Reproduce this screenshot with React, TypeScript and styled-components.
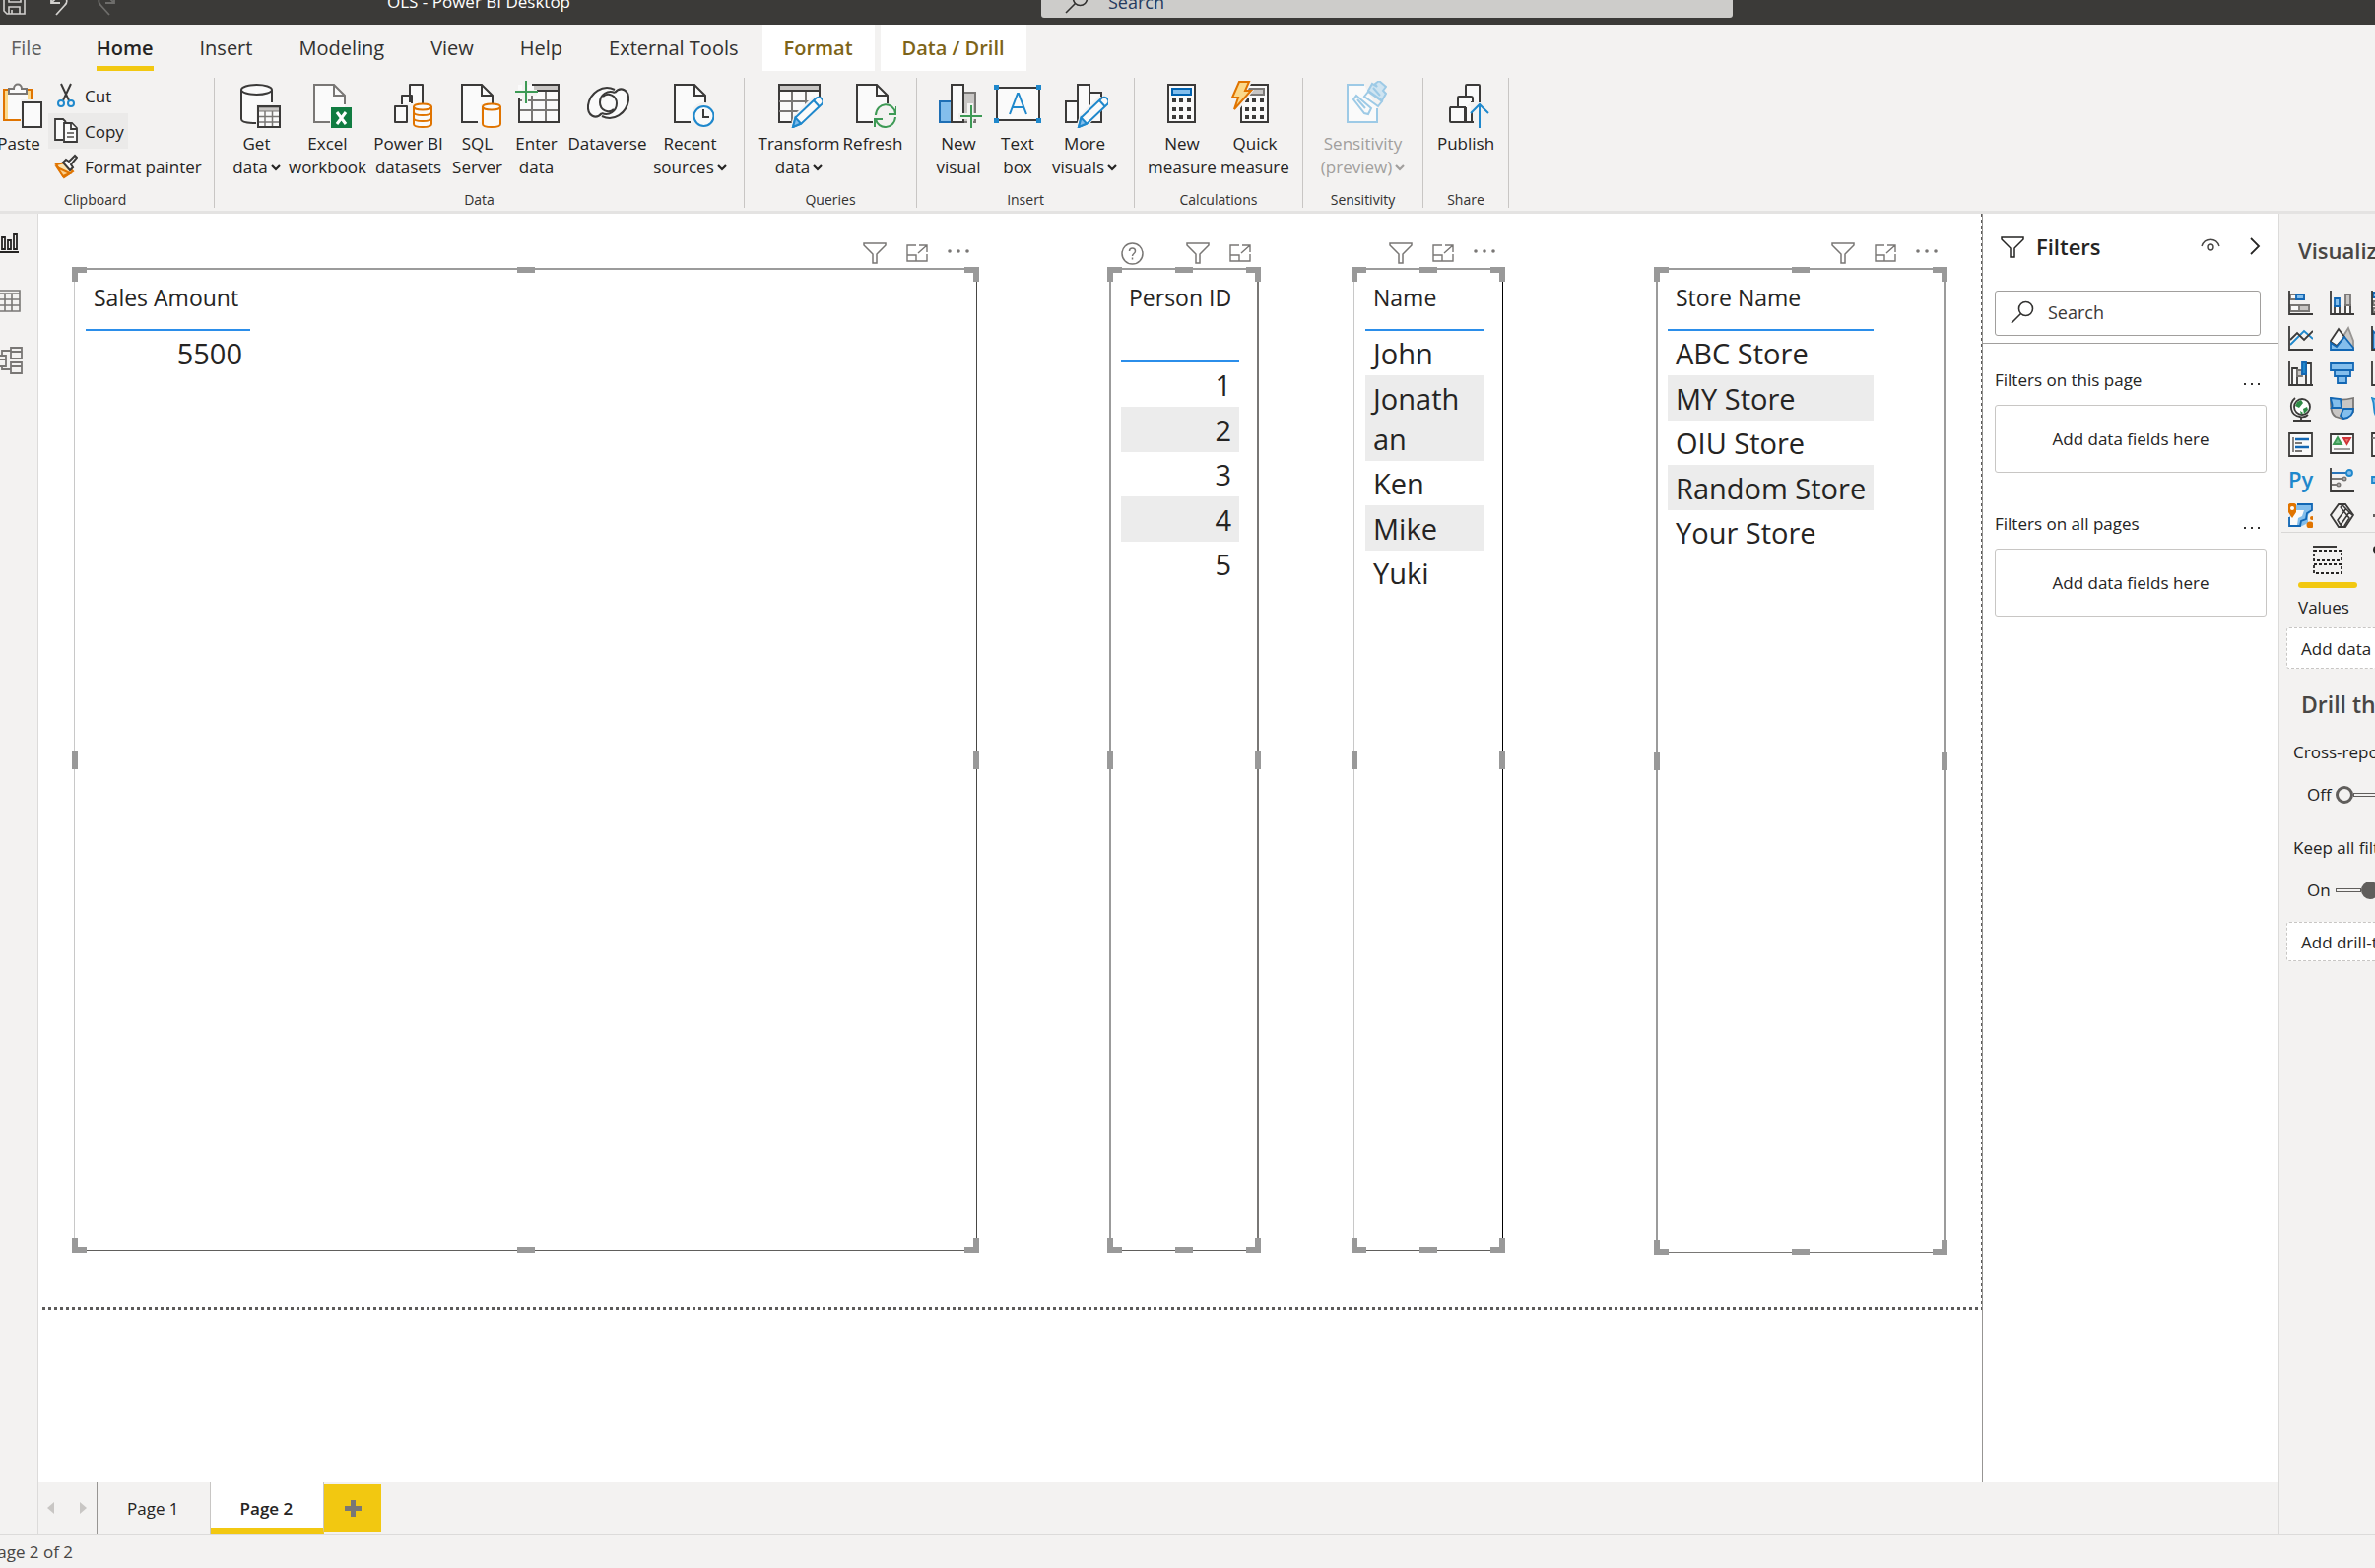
import React from 'react';
import styled, { createGlobalStyle, css } from 'styled-components';

const GlobalStyle = createGlobalStyle`
  *, *::before, *::after { box-sizing: border-box; }
  html, body { margin: 0; background: #f3f2f1; overflow: hidden; }
  body, button, input, table {
    font-family: "Open Sans", "Noto Sans", "Liberation Sans", sans-serif;
    font-size: 17px;
    color: #252423;
  }
  button { background: none; border: 0; padding: 0; margin: 0; cursor: pointer; white-space: nowrap; }
  svg { display: block; flex: none; }
`;

const Shell = styled.div`
  display: flex;
  flex-direction: column;
  height: 100vh;
  min-height: 1200px;
  overflow: hidden;
  background: #f3f2f1;
`;

/* ---------- title bar ---------- */

const TitleBar = styled.header`
  flex: none;
  display: grid;
  grid-template-columns: 393px 1fr 702px 652px;
  align-items: end;
  align-content: end;
  height: 25px;
  overflow: hidden;
  background: #3b3a38;
  color: #fff;
`;
const QuickAccess = styled.div`
  display: flex;
  gap: 22px;
  padding: 0 0 9px 3px;
`;
const QuickButton = styled.button`
  color: #d2d0ce;
  &:disabled { color: #6e6d6b; }
`;
const DocTitle = styled.div`
  font-size: 17px;
  line-height: 24px;
  padding-bottom: 11px;
`;
const GlobalSearch = styled.label`
  display: flex;
  align-items: center;
  gap: 18px;
  height: 40px;
  margin-bottom: 7px;
  padding: 8px 0 0 24px;
  border-radius: 3px;
  background: #cdccca;
  color: #3b3a38;
`;
const GlobalInput = styled.input`
  flex: 1;
  border: 0;
  outline: 0;
  background: transparent;
  font-size: 18px;
  &::placeholder { color: #243a5e; opacity: 1; }
`;

/* ---------- ribbon ---------- */

const TabRow = styled.nav`
  flex: none;
  display: flex;
  height: 47px;
`;
const RibbonTab = styled.button<{ $kind?: 'active' | 'context' }>`
  height: 47px;
  padding: 0 24px 0 23px;
  font-size: 20px;
  line-height: 24px;
  color: #323130;
  &:first-child { padding: 0 32px 0 11px; color: #605e5c; }
  ${p => p.$kind === 'active' && css`font-weight: 600; color: #252423;`}
  ${p => p.$kind === 'context' && css`
    margin-right: 6px;
    padding: 0 22px;
    background: #fff;
    font-weight: 600;
    color: #7d6419;
  `}
`;
const TabText = styled.span<{ $active?: boolean }>`
  display: flex;
  align-items: center;
  height: 47px;
  padding-top: 6px;
  border-bottom: 5px solid ${p => (p.$active ? '#f2c811' : 'transparent')};
`;
const Ribbon = styled.div`
  flex: none;
  display: flex;
  height: 145px;
  padding: 7px 0 3px;
  border-bottom: 3px solid #e4e3e2;
`;
const Group = styled.section<{ $w: number }>`
  display: flex;
  flex-direction: column;
  justify-content: space-between;
  flex: none;
  width: ${p => p.$w}px;
  border-right: 1px solid #c8c6c4;
`;
const GroupItems = styled.div`
  display: flex;
  justify-content: center;
`;
const GroupLabel = styled.div`
  font-size: 14px;
  line-height: 16px;
  text-align: center;
  color: #323130;
`;
const ClipLabel = styled(GroupLabel)`
  padding-right: 24px;
`;
const BigButton = styled.button<{ $w: number }>`
  display: flex;
  flex-direction: column;
  align-items: center;
  flex: none;
  width: ${p => p.$w}px;
  padding-top: 3px;
  line-height: 24px;
  &:disabled { color: #a19f9d; }
`;
const BigLabel = styled.span`
  display: flex;
  align-items: center;
  justify-content: center;
  gap: 3px;
`;
const BigText = styled.span`
  padding-top: 4px;
`;
const ClipItems = styled.div`
  display: flex;
  margin-left: -11px;
`;
const SmallColumn = styled.div`
  display: flex;
  flex-direction: column;
  align-items: flex-start;
`;
const SmallButton = styled.button<{ $hot?: boolean }>`
  display: flex;
  align-items: center;
  gap: 7px;
  height: 36px;
  padding: 0 4px 0 6px;
  background: ${p => (p.$hot ? '#ebeae9' : 'transparent')};
`;

/* ---------- body ---------- */

const Body = styled.div`
  flex: 1;
  display: flex;
  min-height: 0;
`;
const Rail = styled.nav`
  flex: none;
  display: flex;
  flex-direction: column;
  gap: 34px;
  width: 39px;
  padding-top: 17px;
  border-right: 1px solid #dcdbda;
`;
const RailButton = styled.button`
  width: 24px;
  height: 25px;
`;
const Center = styled.main`
  flex: 1;
  display: flex;
  flex-direction: column;
  min-width: 0;
`;
const Work = styled.div`
  flex: 1;
  display: flex;
  min-height: 0;
  background: #fff;
`;
const Canvas = styled.div`
  flex: 1;
  min-width: 0;
  padding-left: 4px;
`;
const Sheet = styled.div`
  position: relative;
  height: 1113px;
  background:
    repeating-linear-gradient(90deg, #5c5b5a 0 3px, transparent 3px 6px) 0 100% / 100% 3px no-repeat,
    repeating-linear-gradient(180deg, #5c5b5a 0 3px, transparent 3px 6px) 100% 0 / 1px 100% no-repeat;
`;

/* ---------- visuals ---------- */

type Place = { $x: number; $w: number; $h: number; $left: string; $right: string; $bottom: string };
const Visual = styled.article<Place>`
  position: absolute;
  left: ${p => p.$x}px;
  top: 54px;
  width: ${p => p.$w}px;
  height: ${p => p.$h}px;
  padding: 8px 0 0 12px;
  &::before {
    content: "";
    position: absolute;
    inset: 1px 2px 2px 2px;
    border-top: 2px solid #9b9b9b;
    border-left: ${p => p.$left};
    border-right: ${p => p.$right};
    border-bottom: ${p => p.$bottom};
  }
`;
const HANDLE = '#999';
const Corner = styled.span<{ $v: 'top' | 'bottom'; $h: 'left' | 'right' }>`
  position: absolute;
  ${p => p.$v}: 0;
  ${p => p.$h}: 0;
  width: 15px;
  height: 15px;
  border: 0 solid ${HANDLE};
  border-${p => p.$v}-width: 6px;
  border-${p => p.$h}-width: 6px;
`;
const Grip = styled.span<{ $side: 'top' | 'bottom' | 'left' | 'right' }>`
  position: absolute;
  background: ${HANDLE};
  ${p => p.$side}: 0;
  ${p => (p.$side === 'top' || p.$side === 'bottom'
    ? css`left: calc(50% - 9px); width: 18px; height: 6px;`
    : css`top: calc(50% - 9px); width: 6px; height: 18px;`)}
`;
const VisualTools = styled.div`
  position: absolute;
  right: 10px;
  bottom: 100%;
  display: flex;
  align-items: center;
  gap: 20px;
  height: 28px;
  color: #797775;
`;
const ToolButton = styled.button`
  color: #797775;
`;
const HelpTool = styled(ToolButton)`
  margin-right: 23px;
`;
const Grid = styled.table<{ $w: number }>`
  position: relative;
  width: ${p => p.$w}px;
  margin: 0 0 0 2px;
  border-collapse: separate;
  border-spacing: 0;
  table-layout: fixed;
`;
const HeadCell = styled.th<{ $tall?: boolean }>`
  height: ${p => (p.$tall ? 89 : 57)}px;
  padding: 6px 0 0 8px;
  border-bottom: 2px solid #2b8eea;
  vertical-align: top;
  text-align: left;
  font-weight: 400;
  font-size: 23px;
  line-height: 34px;
  white-space: nowrap;
`;
const Cell = styled.td<{ $num?: boolean; $band?: boolean }>`
  height: ${p => (p.$band ? 46 : 45)}px;
  padding: ${p => (p.$band ? 3 : 2)}px ${p => (p.$num ? 8 : 4)}px 2px 8px;
  font-size: 29px;
  line-height: 41px;
  text-align: ${p => (p.$num ? 'right' : 'left')};
  background: ${p => (p.$band ? '#ececec' : 'transparent')};
`;

/* ---------- filters pane ---------- */

const Filters = styled.aside`
  flex: none;
  width: 301px;
  border-left: 1px solid #979593;
`;
const FiltersTop = styled.div`
  padding: 18px 18px 7px 12px;
  border-bottom: 1px solid #a19f9d;
`;
const FiltersHead = styled.div`
  display: flex;
  align-items: center;
  height: 32px;
  padding-left: 6px;
`;
const FiltersTitle = styled.h2`
  flex: 1;
  margin: 0 0 0 12px;
  padding-bottom: 2px;
  font-size: 22px;
  line-height: 32px;
  font-weight: 600;
`;
const HeadButton = styled.button`
  margin-left: 30px;
  &:first-of-type { margin-left: 0; }
`;
const FilterSearch = styled.label`
  display: flex;
  align-items: center;
  gap: 14px;
  height: 46px;
  margin-top: 28px;
  padding: 0 0 2px 15px;
  border: 1px solid #a19f9d;
  border-radius: 3px;
`;
const FilterInput = styled.input`
  flex: 1;
  min-width: 0;
  padding: 0;
  border: 0;
  outline: 0;
  background: transparent;
  font-size: 18px;
  &::placeholder { color: #3b3a38; opacity: 1; }
`;
const FilterSection = styled.section`
  padding: 25px 12px 40px 12px;
  & + & { padding-top: 0; }
`;
const FilterHead = styled.div`
  display: flex;
  justify-content: space-between;
  align-items: center;
  height: 24px;
  padding-right: 6px;
  margin-bottom: 13px;
`;
const FilterMenu = styled.button`
  padding-top: 8px;
`;
const FilterName = styled.h3`
  margin: 0;
  font-size: 17px;
  line-height: 24px;
  font-weight: 400;
`;
const DropBox = styled.div`
  display: flex;
  align-items: center;
  justify-content: center;
  height: 69px;
  border: 1px solid #c8c6c4;
  border-radius: 3px;
`;

/* ---------- visualizations pane ---------- */

const VizPane = styled.aside`
  flex: none;
  width: 98px;
  overflow: hidden;
  border-left: 1px solid #dcdbda;
  white-space: nowrap;
`;
const PaneTitle = styled.h2`
  margin: 0;
  padding: 21px 0 0 19px;
  font-size: 22px;
  line-height: 32px;
  font-weight: 600;
  color: #484644;
`;
const VizGrid = styled.div`
  display: grid;
  grid-template-columns: repeat(3, 25px);
  grid-auto-rows: 25px;
  gap: 11px 17px;
  margin-top: 25px;
  padding: 0 0 4px 9px;
`;
const PyLabel = styled.span`
  display: block;
  padding-bottom: 4px;
  font-size: 22px;
  line-height: 22px;
  font-weight: 600;
  color: #1f88cc;
`;
const WellTabs = styled.div`
  display: flex;
  gap: 15px;
  margin-left: 2px;
  padding: 10px 0 0 17px;
  border-top: 1px solid #d8d7d6;
`;
const WellTab = styled.button<{ $on?: boolean }>`
  flex: none;
  display: flex;
  flex-direction: column;
  align-items: center;
  gap: 6px;
  width: 60px;
  &::after {
    content: "";
    width: 60px;
    height: 6px;
    border-radius: 3px;
    background: ${p => (p.$on ? '#f2c811' : 'transparent')};
  }
`;
const WellName = styled.div`
  margin: 8px 0 8px 19px;
  line-height: 24px;
`;
const Well = styled.div<{ $h: number }>`
  display: flex;
  align-items: center;
  width: 260px;
  height: ${p => p.$h}px;
  margin-left: 7px;
  padding-left: 14px;
  border: 1px dashed #c8c6c4;
  border-radius: 3px;
  background: #fff;
`;
const DrillTitle = styled.h2`
  margin: 20px 0 21px 22px;
  font-size: 23px;
  line-height: 32px;
  font-weight: 600;
  color: #484644;
`;
const Switch = styled.label`
  display: grid;
  grid-template-columns: 29px 44px;
  row-gap: 19px;
  align-items: center;
  padding: 0 0 30px 28px;
  line-height: 24px;
`;
const LastSwitch = styled(Switch)`
  padding-bottom: 20px;
`;
const SwitchName = styled.span`
  grid-column: 1 / -1;
  margin-left: -14px;
`;
const SwitchInput = styled.input`
  appearance: none;
  display: flex;
  align-items: center;
  width: 44px;
  height: 18px;
  margin: 0;
  &::before {
    content: "";
    order: 1;
    flex: 1;
    height: 4px;
    border: 1px solid #605e5c;
  }
  &::after {
    content: "";
    width: 18px;
    height: 18px;
    border: 3px solid #605e5c;
    border-radius: 50%;
  }
  &:checked::before { order: 0; }
  &:checked::after { order: 1; background: #605e5c; }
`;

/* ---------- page tabs and status ---------- */

const PageTabs = styled.nav`
  flex: none;
  display: flex;
  height: 52px;
`;
const PagerArrows = styled.div`
  display: flex;
  align-items: center;
  gap: 26px;
  width: 60px;
  padding-left: 9px;
  border-right: 1px solid #979593;
`;
const PageTab = styled.button<{ $on?: boolean }>`
  height: 52px;
  padding: ${p => (p.$on ? '6px 31px 0 30px' : '0 31px 0 30px')};
  border-right: 1px solid #c8c6c4;
  ${p => p.$on && css`
    background: #fff;
    font-weight: 600;
    border-bottom: 6px solid #f2c811;
  `}
`;
const AddPage = styled.button`
  display: flex;
  align-items: center;
  justify-content: center;
  width: 58px;
  height: 48px;
  margin-top: 2px;
  background: #f2c811;
`;
const StatusBar = styled.footer`
  flex: none;
  height: 35px;
  margin-left: -13px;
  border-top: 1px solid #dcdbda;
  line-height: 36px;
  color: #484644;
`;

/* ---------- ribbon drawings ---------- */

const K = '#3b3a39';
const B = '#1f88cc';
const W = '#fafafa';
const O = '#e07400';
const G = '#3d9a55';

const Big = ({ children }: { children: React.ReactNode }) => (
  <svg width="48" height="48" viewBox="0 0 48 48" fill="none" stroke={K} strokeWidth="2">{children}</svg>
);
const PageShape = ({ c = K }: { c?: string }) => (
  <>
    <path d="M8 4h20l11 11v27H8z" fill={W} stroke="none" />
    <path d="M24 42H8V4h20l11 11v9" stroke={c} />
    <path d="M28 4v11h11" stroke={c} />
  </>
);
const Pencil = () => (
  <>
    <path d="M15 48l4-13 20-20 9 8-20 22z" fill="#f3f2f1" stroke="none" />
    <path d="M18 47l2.500-9.500L41 18a4 4 0 016 6L26 44z" fill={W} stroke={B} />
    <path d="M18 47l2.500-9.500 5.500 6z" fill="#83beec" stroke={B} />
    <path d="M39 20l5.500 6" stroke={B} />
  </>
);
const PasteIcon = () => (
  <Big>
    <path d="M8 8h30v33H8z" fill={O} stroke="none" />
    <path d="M10 10h26v29H10z" fill="#fbd98b" stroke="none" />
    <path d="M13 12h20v27H13z" fill={W} stroke="none" />
    <path d="M14 13V8h5c0-6 8-6 8 0h5v5z" fill={W} stroke="#797775" />
    <path d="M26 19h24v30H26z" fill="#f3f2f1" stroke="none" />
    <path d="M28 22h19v25H28z" fill={W} />
  </Big>
);
const GetDataIcon = () => (
  <Big>
    <path d="M8 9v30c1 3 7 4 15 4V24h16V9c0-3-7-5-15.500-5S8 6 8 9z" fill={W} stroke="none" />
    <ellipse cx="23.500" cy="9" rx="15.500" ry="5" />
    <path d="M8 9v30c0 3 7 4 15 4M39 9v13" />
    <path d="M25 26h22v21H25z" fill={W} />
    <path d="M25 27h22v4H25z" fill="#c8c6c4" stroke="#797775" strokeWidth="1" />
    <path d="M25 36.500h22M25 42h22M32 31v16M39.500 31v16" stroke="#797775" strokeWidth="1.500" />
    <path d="M25 26h22v21H25z" />
  </Big>
);
const ExcelIcon = () => (
  <Big>
    <g transform="translate(2 0)"><PageShape c="#797775" /></g>
    <path d="M27 27h21v21H27z" fill="#107c41" stroke="none" />
    <path d="M33 32l9 12M42 32l-9 12" stroke="#fff" strokeWidth="3" />
  </Big>
);
const Cylinder = ({ bands }: { bands?: boolean }) => (
  <>
    <path d="M27 24h21v24H27z" fill="#f3f2f1" stroke="none" />
    <path d="M29 26v18c0 4 18 4 18 0V26c0 4-18 4-18 0z" fill={W} stroke={O} />
    <ellipse cx="38" cy="26.500" rx="9" ry="3" fill={W} stroke={O} />
    {bands && <path d="M29 32c0 4 18 4 18 0M29 38c0 4 18 4 18 0" stroke={O} />}
  </>
);
const DatasetsIcon = () => (
  <Big>
    <path d="M25 22V4h13v22M17 24V15h10v8M10 42V26h12v16z" fill={W} strokeLinejoin="round" />
    <Cylinder bands />
  </Big>
);
const SqlIcon = () => <Big><PageShape /><Cylinder /></Big>;
const EnterIcon = () => (
  <Big>
    <path d="M5 4h42v38H5z" fill={W} stroke="none" />
    <path d="M21 5h25v5H21z" fill="#c8c6c4" stroke="none" />
    <path d="M6 20h40M6 30h40M19 12v30M33 11v31" stroke="#797775" />
    <path d="M6 18v24h40V4H19M19 10h27" />
    <path d="M12 0v23M2 12h22" stroke="#f3f2f1" strokeWidth="6" />
    <path d="M13 0v23M2 11h23" stroke={G} />
  </Big>
);
const Arm = () => (
  <>
    <path d="M31 9C19 3 6 12 4 25c-1 11 8 15 14 8" />
    <path d="M18 33c7 3 15-2 15-10 0-8-9-12-14-7" />
  </>
);
const DataverseIcon = () => (
  <Big>
    <path d="M4 25C6 12 19 3 31 9c8-4 14 2 13 11-2 13-14 21-26 15-6 7-15 1-14-10z" fill={W} stroke="none" />
    <Arm />
    <g transform="rotate(180 24.500 22.500)"><Arm /></g>
  </Big>
);
const RecentIcon = () => (
  <Big>
    <PageShape />
    <circle cx="38" cy="35" r="13" fill="#f3f2f1" stroke="none" />
    <circle cx="37.500" cy="36" r="10" fill={W} stroke={B} />
    <path d="M37 29v8h6" />
  </Big>
);
const TransformIcon = () => (
  <Big>
    <path d="M4 4h41v38H4z" fill={W} />
    <path d="M5 5h39v5H5z" fill="#c8c6c4" stroke="none" />
    <path d="M4 21h41M4 31h41M17 11v31M31 11v31" stroke="#797775" />
    <path d="M4 10h41" />
    <path d="M26 43h22V20z" fill="#f3f2f1" stroke="none" />
    <Pencil />
  </Big>
);
const RefreshIcon = () => (
  <Big>
    <PageShape />
    <circle cx="38" cy="36" r="13" fill="#f3f2f1" stroke="none" />
    <path d="M27 35c1-14 18-14 20-2M48 26v8h-8M47 37c-1 13-18 13-20 2M26 47v-8h8" stroke={G} />
  </Big>
);
const NewVisualIcon = () => (
  <Big>
    <path d="M5 21h12v21H5z" fill="#83beec" stroke="#1e6fb5" />
    <path d="M29 12h12v30H29z" fill="#c8c6c4" stroke="#797775" />
    <path d="M17 4h12v38H17z" fill={W} />
    <path d="M36 23v26M24 36h25" stroke="#f3f2f1" strokeWidth="6" />
    <path d="M37 25v23M26 36h22" stroke={G} />
  </Big>
);
const TextBoxIcon = () => (
  <Big>
    <path d="M3 7h43v33H3z" fill={W} />
    <path d="M16 34l8-21h1l8 21M19 27h11" stroke={B} />
    <path d="M0 4h5v5H0zM43 4h5v5h-5zM0 38h5v5H0zM43 38h5v5h-5z" fill={B} stroke="none" />
  </Big>
);
const MoreVisualsIcon = () => (
  <Big>
    <path d="M5 21h12v21H5zM29 12h12v30H29z" fill={W} />
    <path d="M17 4h12v38H17z" fill={W} />
    <Pencil />
  </Big>
);
const Calculator = ({ x, color }: { x: number; color: string }) => (
  <g transform={`translate(${x} 0)`}>
    <path d="M1 4h27v38H1z" fill={W} />
    <path d="M5 8h19v6H5z" fill={color} stroke={color === '#83beec' ? '#0063b1' : '#797775'} />
    {[19, 28, 36].map(y => [5, 12, 20].map(cx => (
      <path key={`${y}-${cx}`} d={`M${cx} ${y - 1}h4v4h-4z`} fill={K} stroke="none" />
    )))}
  </g>
);
const NewMeasureIcon = () => <Big><Calculator x={9} color="#83beec" /></Big>;
const QuickMeasureIcon = () => (
  <Big>
    <Calculator x={9} color="#c8c6c4" />
    <path d="M6 -1h16L17 9h6L6 32l2-10H-1z" fill="#f3f2f1" stroke="none" />
    <path d="M8 1h10l-4 9h6L3 29l4-12H1z" fill="#fbd98b" stroke={O} />
  </Big>
);
const SensitivityIcon = () => (
  <Big>
    <g stroke="#9dcae6">
      <path d="M25 4H8v38h30V28" fill={W} />
      <path d="M36 3l4-3 7 6-3 4 3 3-4 7-14-10 4-7 5 3z" fill="#cfe4f1" />
      <path d="M29 11l14 10-4 5-14-10zM34 7l7 8" />
      <path d="M17 15l15 13-3 6-4-1-11-14z" />
      <path d="M18 19l8 9" />
    </g>
  </Big>
);
const PublishIcon = () => (
  <Big>
    <path d="M24 15V5q0-1 1-1h12q1 0 1 1v17M16 26V17q0-1 1-1h12q2 0 2 2v8M8 27h15v15H9q-1 0-1-1V28q0-1 1-1zM24 27v15h6V21" fill={W} />
    <path d="M29 22h19v26H35V32h-6z" fill="#f3f2f1" stroke="none" />
    <path d="M38 48V24M29 33l9-9 9 9" stroke={B} />
    <path d="M23 42h9" />
  </Big>
);
const CutIcon = () => (
  <svg width="24" height="26" viewBox="0 0 24 26" fill="none" strokeWidth="2">
    <path d="M7 1l8 17M17 1L9 18" stroke={K} />
    <circle cx="7" cy="21" r="3" stroke={B} /><circle cx="17" cy="21" r="3" stroke={B} />
  </svg>
);
const CopyIcon = () => (
  <svg width="24" height="26" viewBox="0 0 24 26" fill={W} stroke={K} strokeWidth="1.800">
    <path d="M9 22H1V1h8l3 3" />
    <path d="M10 5h8l5 5v14H10z" /><path d="M17 5v6h6" /><path d="M13 15h7M13 19h7" stroke="#797775" />
  </svg>
);
const PainterIcon = () => (
  <svg width="24" height="26" viewBox="0 0 24 26" fill={W} strokeWidth="2">
    <path d="M2 11l9-2 8 9-9 6z" stroke={O} fill="#fbe3b0" />
    <path d="M3 14l6 9 7-3z" fill="#fbd08b" stroke={O} />
    <path d="M9 9l3-3 3 2 6-6 2 2-6 7 2 3-3 3z" stroke={K} />
  </svg>
);
const Chevron = () => (
  <svg width="10" height="8" viewBox="0 0 10 8" fill="none" stroke="currentColor" strokeWidth="2.200"><path d="M1 2l4 4 4-4" /></svg>
);

/* ---------- small drawings ---------- */

const FunnelIcon = () => (
  <svg width="24" height="22" viewBox="0 0 24 22" fill="none" stroke="currentColor" strokeWidth="1.500"><path d="M1 1h22v2l-9 9v9h-4v-9L1 3z" /></svg>
);
const FocusIcon = () => (
  <svg width="22" height="20" viewBox="0 0 22 20" fill="none" stroke="currentColor" strokeWidth="1.400">
    <path d="M10 2H1v16h20v-7M1 12h9v6M13 2h8v7M21 2l-9 8" />
  </svg>
);
const DotsIcon = () => (
  <svg width="22" height="22" viewBox="0 0 22 22" fill="currentColor"><circle cx="2" cy="9" r="1.800" /><circle cx="11" cy="9" r="1.800" /><circle cx="20" cy="9" r="1.800" /></svg>
);
const SmallDots = () => (
  <svg width="18" height="4" viewBox="0 0 18 4" fill="#323130"><path d="M1 1h2v2H1zM8 1h2v2H8zM15 1h2v2h-2z" /></svg>
);
const HelpIcon = () => (
  <svg width="23" height="23" viewBox="0 0 23 23" fill="none" stroke="currentColor" strokeWidth="1.500">
    <circle cx="11.500" cy="11.500" r="10.500" /><path d="M8.500 9c0-4 6-4 6 0 0 2.500-3 2.500-3 5M11.500 15.500v2" />
  </svg>
);
const SearchIcon = () => (
  <svg width="24" height="24" viewBox="0 0 24 24" fill="none" stroke="#323130" strokeWidth="1.600"><circle cx="15.500" cy="8.500" r="7" /><path d="M10.500 13.500L1 23" /></svg>
);

/* ---------- visualization gallery ---------- */

const Mini = ({ children }: { children: React.ReactNode }) => (
  <svg width="25" height="25" viewBox="0 0 25 25" fill="none" stroke={K} strokeWidth="1.800">{children}</svg>
);
const axis = <path d="M1 0v24h24" />;
const LB = '#83beec';
const DB = '#1267b4';
const gallery: { name: string; art: React.ReactNode }[] = [
  { name: 'Stacked bar chart', art: <Mini><path d="M2 4h14v5H2z" fill={W} stroke="#797775" /><path d="M8 4h8v5H8z" fill={LB} stroke={DB} /><path d="M2 15h19v6H2z" fill={W} stroke="#797775" /><path d="M11 15h10v6H11z" fill="#c8c6c4" stroke="#797775" />{axis}</Mini> },
  { name: 'Stacked column chart', art: <Mini><path d="M5 16h5v8H5zM16 15h5v9h-5z" fill={W} /><path d="M5 8h5v8H5z" fill={LB} stroke={DB} /><path d="M16 4h5v11h-5z" fill="#c8c6c4" stroke="#797775" />{axis}</Mini> },
  { name: 'Clustered bar chart', art: <Mini><path d="M2 2h16v5H2z" fill={LB} stroke={DB} /><path d="M2 11h18v4H2zM2 18h12v4H2z" fill="#c8c6c4" stroke="#797775" />{axis}</Mini> },
  { name: 'Line chart', art: <Mini><path d="M2 19L16 5l9 8" stroke={B} /><path d="M2 14l7-7 7 7 9-9" />{axis}</Mini> },
  { name: 'Area chart', art: <Mini><path d="M12 13L19 2l5 13v9H12z" fill="#c8c6c4" stroke="#979593" /><path d="M1 15L9 3l6 8-8 9-6-4z" fill={W} /><path d="M1 17l6 4 8-10 9 11v2H1z" fill={LB} stroke={DB} /></Mini> },
  { name: 'Stacked area chart', art: <Mini><path d="M2 5l8 8 14-9v19H2z" fill={LB} stroke={DB} />{axis}</Mini> },
  { name: 'Ribbon chart', art: <Mini><path d="M4 7h5v17H4zM18 2h5v22h-5z" fill={W} /><path d="M9 9h5v6H9z" fill="#c8c6c4" stroke="#797775" /><path d="M14 1h4v12h-4z" fill={B} stroke={DB} />{axis}</Mini> },
  { name: 'Funnel', art: <Mini><path d="M1 2h23v7H1zM5 9h16v6H5zM8 15h9v7H8z" fill={LB} stroke={DB} /></Mini> },
  { name: 'Scatter chart', art: <Mini>{axis}<circle cx="10" cy="12" r="3" /></Mini> },
  { name: 'Map', art: <Mini><circle cx="14" cy="10" r="8" fill="#fff" /><path d="M9 5l4-2 2 3-4 5-4-2zM15 12l4-2 1 3-4 4zM12 14l3 2-2 2z" fill="#2e8b45" stroke="none" /><path d="M7 1C0 7 2 19 12 20c4 1 6 0 8-2M13 20v4M5 24h18" /></Mini> },
  { name: 'Filled map', art: <Mini><path d="M1 1c8 3 15 2 23 0v14L13 22l-7-2C1 17 1 10 1 1z" fill="#c8c6c4" stroke="#797775" /><path d="M1 1l10 1 1 9H2c2-3-1-6-1-10zM14 12h10c0 6-3 9-10 10l-3-3z" fill={LB} stroke={DB} /></Mini> },
  { name: 'Shape map', art: <Mini><path d="M1 1c8 3 15 2 23 0v14L13 22l-7-2C1 17 5 10 1 1z" fill={LB} stroke={B} /></Mini> },
  { name: 'Multi-row card', art: <Mini><path d="M1 1h23v23H1z" fill={W} /><path d="M5 5v15" stroke="#797775" /><path d="M7 7h14M7 15h14" stroke={DB} strokeWidth="2.500" /><path d="M7 11h7M7 19h7" stroke="#797775" /></Mini> },
  { name: 'KPI', art: <Mini><path d="M1 2h23v19H1z" fill={W} /><path d="M4 12l4-7 4 7z" fill="#6cbf84" stroke={G} /><path d="M14 6h7l-3.500 6z" fill="#e8736f" stroke="#d13438" /><path d="M4 17h17" stroke="#979593" /></Mini> },
  { name: 'Slicer', art: <Mini><path d="M1 1h23v23H1z" fill={W} /><path d="M1 6h23" stroke="#797775" /></Mini> },
  { name: 'Python visual', art: <PyLabel>Py</PyLabel> },
  { name: 'Key influencers', art: <Mini>{axis}<path d="M2 5h15" stroke={DB} /><circle cx="20" cy="5" r="3" fill={LB} stroke={B} /><path d="M2 11h11M2 17h5" stroke="#797775" /><circle cx="15" cy="11" r="1.600" stroke="#797775" /><circle cx="9" cy="17" r="1.600" stroke="#797775" /></Mini> },
  { name: 'Decomposition tree', art: <Mini><path d="M1 9h9v6H1z" fill={LB} stroke={B} /></Mini> },
  { name: 'ArcGIS map', art: <Mini><path d="M9 1h15v6l-4 5v8l-8 4H1V14z" fill={LB} stroke="none" /><path d="M9 1h15v6l-5 3-1 6-5 2-1 5H1v-9" stroke={DB} /><path d="M8 7l8 0-2 6-4 2-1 7H2v-8z" fill={W} stroke="none" /><path d="M0 1q4-3 8 0v8l-4 6-4-6z" fill={O} stroke="none" /><circle cx="4" cy="5" r="2" fill="#fff" stroke="none" /><circle cx="22" cy="22" r="3.500" fill={O} stroke="none" /><circle cx="24" cy="15" r="2" fill={O} stroke="none" /></Mini> },
  { name: 'Power Apps', art: <Mini><path d="M9 1h7l8 11-8 12H9L1 12z" /><path d="M11 4q2-3 4 0l8 8M11 4l9 11-5 8q-2 2-4-1l9-13M11 22l-3-5 9-12" strokeWidth="1.600" /></Mini> },
  { name: 'Get more visuals', art: <Mini><path d="M2 11h3v3H2zM10 11h3v3h-3z" fill="#605e5c" stroke="none" /></Mini> },
];

/* ---------- data ---------- */

type Item = { icon: React.ReactNode; lines: string[]; w: number; menu?: boolean; off?: boolean };
const groups: { name: string; w: number; items: Item[] }[] = [
  {
    name: 'Data', w: 538, items: [
      { icon: <GetDataIcon />, lines: ['Get', 'data'], w: 58, menu: true },
      { icon: <ExcelIcon />, lines: ['Excel', 'workbook'], w: 86 },
      { icon: <DatasetsIcon />, lines: ['Power BI', 'datasets'], w: 78 },
      { icon: <SqlIcon />, lines: ['SQL', 'Server'], w: 62 },
      { icon: <EnterIcon />, lines: ['Enter', 'data'], w: 58 },
      { icon: <DataverseIcon />, lines: ['Dataverse'], w: 86 },
      { icon: <RecentIcon />, lines: ['Recent', 'sources'], w: 82, menu: true },
    ],
  },
  {
    name: 'Queries', w: 175, items: [
      { icon: <TransformIcon />, lines: ['Transform', 'data'], w: 86, menu: true },
      { icon: <RefreshIcon />, lines: ['Refresh'], w: 64 },
    ],
  },
  {
    name: 'Insert', w: 221, items: [
      { icon: <NewVisualIcon />, lines: ['New', 'visual'], w: 62 },
      { icon: <TextBoxIcon />, lines: ['Text', 'box'], w: 58 },
      { icon: <MoreVisualsIcon />, lines: ['More', 'visuals'], w: 78, menu: true },
    ],
  },
  {
    name: 'Calculations', w: 171, items: [
      { icon: <NewMeasureIcon />, lines: ['New', 'measure'], w: 74 },
      { icon: <QuickMeasureIcon />, lines: ['Quick', 'measure'], w: 74 },
    ],
  },
  { name: 'Sensitivity', w: 122, items: [{ icon: <SensitivityIcon />, lines: ['Sensitivity', '(preview)'], w: 86, menu: true, off: true }] },
  { name: 'Share', w: 87, items: [{ icon: <PublishIcon />, lines: ['Publish'], w: 64 }] },
];

const light = '1px solid #c8c8c8';
const mid = '2px solid #9b9b9b';
const dark = '1px solid #605e5c';
type VisualData = {
  head: string; rows: React.ReactNode[]; num?: boolean; help?: boolean;
  x: number; w: number; h: number; tw: number; left: string; right: string; bottom: string;
};
const visuals: VisualData[] = [
  { head: 'Sales Amount', rows: ['5500'], num: true, x: 30, w: 921, h: 1001, tw: 167, left: light, right: '1px solid #484644', bottom: dark },
  { head: 'Person ID', rows: ['1', '2', '3', '4', '5'], num: true, help: true, x: 1081, w: 156, h: 1001, tw: 120, left: mid, right: '2px solid #797775', bottom: dark },
  { head: 'Name', rows: ['John', <>Jonath<wbr />an</>, 'Ken', 'Mike', 'Yuki'], x: 1329, w: 156, h: 1001, tw: 120, left: light, right: '1px solid #000', bottom: dark },
  { head: 'Store Name', rows: ['ABC Store', 'MY Store', 'OIU Store', 'Random Store', 'Your Store'], x: 1636, w: 298, h: 1003, tw: 209, left: mid, right: mid, bottom: '1px solid #797775' },
];

const RibbonItem = ({ item }: { item: Item }) => (
  <BigButton $w={item.w} disabled={item.off}>
    {item.icon}
    <BigText>
      {item.lines.map((line, i) => (
        <BigLabel key={line}>
          {line}
          {item.menu && i === item.lines.length - 1 && <Chevron />}
        </BigLabel>
      ))}
    </BigText>
  </BigButton>
);

const VisualCard = ({ v }: { v: VisualData }) => (
  <Visual $x={v.x} $w={v.w} $h={v.h} $left={v.left} $right={v.right} $bottom={v.bottom}>
    <VisualTools>
      {v.help && <HelpTool aria-label="Help"><HelpIcon /></HelpTool>}
      <ToolButton aria-label="Filters"><FunnelIcon /></ToolButton>
      <ToolButton aria-label="Focus mode"><FocusIcon /></ToolButton>
      {!v.help && <ToolButton aria-label="More options"><DotsIcon /></ToolButton>}
    </VisualTools>
    <Grid $w={v.tw}>
      <thead><tr><HeadCell scope="col" $tall={v.help}>{v.head}</HeadCell></tr></thead>
      <tbody>
        {v.rows.map((r, i) => (
          <tr key={i}><Cell $num={v.num} $band={i % 2 === 1}>{r}</Cell></tr>
        ))}
      </tbody>
    </Grid>
    <Corner $v="top" $h="left" /><Corner $v="top" $h="right" />
    <Corner $v="bottom" $h="left" /><Corner $v="bottom" $h="right" />
    <Grip $side="top" /><Grip $side="bottom" /><Grip $side="left" /><Grip $side="right" />
  </Visual>
);

export default function App() {
  return (
    <Shell>
      <GlobalStyle />
      <TitleBar>
        <QuickAccess>
          <QuickButton aria-label="Save">
            <svg width="24" height="24" viewBox="0 0 24 24" fill="none" stroke="currentColor" strokeWidth="1.600"><path d="M1 1h21v21H4l-3-3zM6 1v9h12V1M6 22v-7h11v7M9 18v4" /></svg>
          </QuickButton>
          <QuickButton aria-label="Undo">
            <svg width="24" height="24" viewBox="0 0 24 24" fill="none" stroke="currentColor" strokeWidth="1.800"><path d="M3 2v9h9M3 11l6-6c6-4 13 3 8 8l-9 10" /></svg>
          </QuickButton>
          <QuickButton aria-label="Redo" disabled>
            <svg width="24" height="24" viewBox="0 0 24 24" fill="none" stroke="currentColor" strokeWidth="1.800"><path d="M21 2v9h-9M21 11l-6-6C9 1 2 8 7 13l9 10" /></svg>
          </QuickButton>
        </QuickAccess>
        <DocTitle>OLS - Power BI Desktop</DocTitle>
        <GlobalSearch>
          <SearchIcon />
          <GlobalInput placeholder="Search" aria-label="Search commands" />
        </GlobalSearch>
      </TitleBar>

      <TabRow>
        {['File', 'Home', 'Insert', 'Modeling', 'View', 'Help', 'External Tools'].map(t => (
          <RibbonTab key={t} $kind={t === 'Home' ? 'active' : undefined}>
            <TabText $active={t === 'Home'}>{t}</TabText>
          </RibbonTab>
        ))}
        {['Format', 'Data / Drill'].map(t => (
          <RibbonTab key={t} $kind="context"><TabText>{t}</TabText></RibbonTab>
        ))}
      </TabRow>

      <Ribbon>
        <Group $w={218}>
          <ClipItems>
            <BigButton $w={60}>
              <PasteIcon />
              <BigText>Paste</BigText>
            </BigButton>
            <SmallColumn>
              <SmallButton><CutIcon />Cut</SmallButton>
              <SmallButton $hot><CopyIcon />Copy</SmallButton>
              <SmallButton><PainterIcon />Format painter</SmallButton>
            </SmallColumn>
          </ClipItems>
          <ClipLabel>Clipboard</ClipLabel>
        </Group>
        {groups.map(g => (
          <Group key={g.name} $w={g.w}>
            <GroupItems>{g.items.map(it => <RibbonItem key={it.lines.join(' ')} item={it} />)}</GroupItems>
            <GroupLabel>{g.name}</GroupLabel>
          </Group>
        ))}
      </Ribbon>

      <Body>
        <Rail>
          <RailButton aria-label="Report view">
            <svg width="24" height="24" viewBox="0 0 24 24" fill="none" stroke="#252423" strokeWidth="1.800"><path d="M2 6h3v12H2zM8 9h3v9H8zM14 3h3v15h-3zM0 21h19" /></svg>
          </RailButton>
          <RailButton aria-label="Data view">
            <svg width="24" height="24" viewBox="0 0 24 24" fill="none" stroke="#797775" strokeWidth="1.600"><path d="M-2 1h22v21H-2zM-2 4h22M-2 10h22M-2 16h22M5 4v18M12 4v18" /></svg>
          </RailButton>
          <RailButton aria-label="Model view">
            <svg width="24" height="28" viewBox="0 0 24 28" fill="none" stroke="#797775" strokeWidth="1.800"><path d="M11 1h11v11H11zM11 5h11M11 16h11v11H11zM11 20h11M-2 9h8v11h-8M-2 13h8M2 9V4h9M2 20v3h9" /></svg>
          </RailButton>
        </Rail>

        <Center>
          <Work>
            <Canvas>
              <Sheet>{visuals.map(v => <VisualCard key={v.head} v={v} />)}</Sheet>
            </Canvas>
            <Filters>
              <FiltersTop>
                <FiltersHead>
                  <FunnelIcon />
                  <FiltersTitle>Filters</FiltersTitle>
                  <HeadButton aria-label="Show or hide filters">
                    <svg width="20" height="18" viewBox="0 0 20 18" fill="none" stroke="#484644" strokeWidth="1.400"><path d="M1 8c3-9 15-9 18 0" /><circle cx="10" cy="9" r="3" /></svg>
                  </HeadButton>
                  <HeadButton aria-label="Collapse filters pane">
                    <svg width="11" height="20" viewBox="0 0 11 20" fill="none" stroke="#252423" strokeWidth="1.800"><path d="M1 1l8 8-8 8" /></svg>
                  </HeadButton>
                </FiltersHead>
                <FilterSearch>
                  <SearchIcon />
                  <FilterInput placeholder="Search" aria-label="Search filters" />
                </FilterSearch>
              </FiltersTop>
              {['Filters on this page', 'Filters on all pages'].map(name => (
                <FilterSection key={name}>
                  <FilterHead>
                    <FilterName>{name}</FilterName>
                    <FilterMenu aria-label={`${name} options`}><SmallDots /></FilterMenu>
                  </FilterHead>
                  <DropBox>Add data fields here</DropBox>
                </FilterSection>
              ))}
            </Filters>
          </Work>
          <PageTabs>
            <PagerArrows>
              <button aria-label="Previous page"><svg width="7" height="12" viewBox="0 0 7 12" fill="#c8c6c4"><path d="M7 0v12L0 6z" /></svg></button>
              <button aria-label="Next page"><svg width="7" height="12" viewBox="0 0 7 12" fill="#c8c6c4"><path d="M0 0v12l7-6z" /></svg></button>
            </PagerArrows>
            <PageTab>Page 1</PageTab>
            <PageTab $on>Page 2</PageTab>
            <AddPage aria-label="New page"><svg width="17" height="17" viewBox="0 0 17 17" fill="#797775"><path d="M6 0h5v6h6v5h-6v6H6v-6H0V6h6z" /></svg></AddPage>
          </PageTabs>
        </Center>

        <VizPane>
          <PaneTitle>Visualizations</PaneTitle>
          <VizGrid>
            {gallery.map(g => <button key={g.name} aria-label={g.name}>{g.art}</button>)}
          </VizGrid>
          <WellTabs>
            <WellTab $on aria-label="Fields">
              <svg width="30" height="34" viewBox="0 0 30 34" fill="none" stroke="#252423" strokeWidth="1.800"><path d="M0 4h24" /><path d="M1 8h28v10H1zM1 22h28v9H1z" strokeDasharray="3 2" /></svg>
            </WellTab>
            <WellTab aria-label="Format">
              <svg width="60" height="34" viewBox="0 0 60 34" fill="#252423"><circle cx="5" cy="7" r="4" /></svg>
            </WellTab>
          </WellTabs>
          <WellName>Values</WellName>
          <Well $h={42}>Add data fields here</Well>
          <DrillTitle>Drill through</DrillTitle>
          <Switch>
            <SwitchName>Cross-report</SwitchName>
            Off
            <SwitchInput type="checkbox" role="switch" />
          </Switch>
          <LastSwitch>
            <SwitchName>Keep all filters</SwitchName>
            On
            <SwitchInput type="checkbox" role="switch" defaultChecked />
          </LastSwitch>
          <Well $h={40}>Add drill-through fields here</Well>
        </VizPane>
      </Body>

      <StatusBar>Page 2 of 2</StatusBar>
    </Shell>
  );
}
